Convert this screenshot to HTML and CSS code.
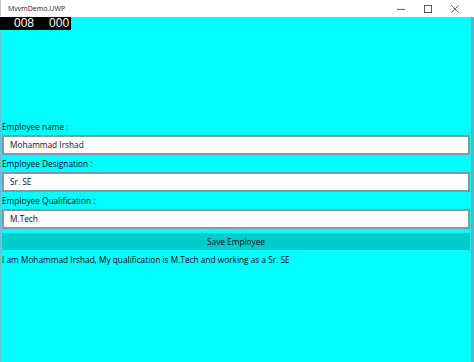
FILE: index.html
```html
<!DOCTYPE html>
<html lang="en">
<head>
    <meta charset="UTF-8">
    <title>MvvmDemo.UWP</title>
    <link rel="stylesheet" href="styles.css">
</head>
<body>
    <div class="window">
        <div class="titlebar">
            <div class="app-title">MvvmDemo.UWP</div>
            <div class="caption-buttons">
                <span class="caption-btn">
                    <svg width="10" height="10" viewBox="0 0 10 10"><path d="M0 5.5h10" stroke="#333" stroke-width="1"/></svg>
                </span>
                <span class="caption-btn">
                    <svg width="10" height="10" viewBox="0 0 10 10"><rect x="0.5" y="0.5" width="9" height="9" fill="none" stroke="#333" stroke-width="1"/></svg>
                </span>
                <span class="caption-btn">
                    <svg width="10" height="10" viewBox="0 0 10 10"><path d="M0.5 0.5l9 9M9.5 0.5l-9 9" stroke="#333" stroke-width="1"/></svg>
                </span>
            </div>
        </div>

        <div class="content">
            <div class="frame-counter">
                <span>008</span>
                <span>000</span>
            </div>

            <div class="form">
                <div class="field-label">Employee name :</div>
                <div class="text-box">Mohammad Irshad</div>

                <div class="field-label">Employee Designation :</div>
                <div class="text-box">Sr. SE</div>

                <div class="field-label">Employee Qualification :</div>
                <div class="text-box">M.Tech</div>

                <button class="save-button">Save Employee</button>

                <div class="summary">I am Mohammad Irshad, My qualification is M.Tech and working as a Sr. SE</div>
            </div>
        </div>
    </div>
</body>
</html>
```

FILE: styles.css
```css
body {
    margin: 0;
    font-family: 'Open Sans', 'Noto Sans', sans-serif;
    background: #ffffff;
}

.window {
    width: 474px;
    height: 362px;
    display: flex;
    flex-direction: column;
}

.titlebar {
    height: 17px;
    display: flex;
    justify-content: space-between;
    align-items: center;
    background: #ffffff;
    border-left: 1px solid #c8c8c8;
}

.app-title {
    font-size: 7px;
    color: #222;
    padding-left: 7px;
}

.caption-buttons {
    display: flex;
    padding-right: 6px;
}

.caption-btn {
    width: 27px;
    height: 17px;
    display: flex;
    align-items: center;
    justify-content: center;
}

.caption-btn svg {
    width: 8px;
    height: 8px;
}

.content {
    flex: 1;
    background: #00ffff;
    border-left: 1px solid #5fc6cc;
    border-right: 3px solid #5fb0c8;
}

.frame-counter {
    display: flex;
    width: fit-content;
    gap: 15px;
    background: #000000;
    color: #ffffff;
    font-family: 'Liberation Sans', sans-serif;
    font-size: 12px;
    line-height: 13px;
    padding: 0 2px 0 14px;
    margin-left: -1px;
}

.form {
    margin-top: 88px;
    display: flex;
    flex-direction: column;
    padding-right: 1px;
}

.field-label {
    font-size: 8.3px;
    color: #000;
    line-height: 10px;
    padding: 4px 0 3px 1px;
}

.text-box {
    margin-left: 1px;
    height: 16px;
    line-height: 16px;
    background: #ffffff;
    border: 2px solid #7f9b9b;
    font-size: 8.3px;
    color: #111;
    padding-left: 6px;
}

.save-button {
    margin: 4px 0 0 1px;
    height: 17px;
    border: none;
    background: #00cccc;
    font-family: inherit;
    font-size: 8.3px;
    color: #111;
    padding: 0;
}

.summary {
    font-size: 8.3px;
    line-height: 12px;
    padding: 4px 0 0 1px;
    color: #000;
}
```
